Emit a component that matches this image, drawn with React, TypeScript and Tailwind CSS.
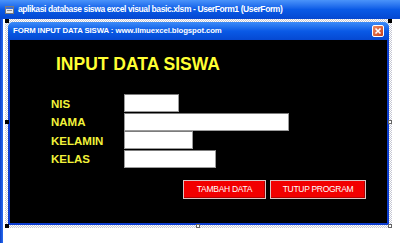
const fields = [
  { label: "NIS", width: "w-[55px]" },
  { label: "NAMA", width: "w-[165px]" },
  { label: "KELAMIN", width: "w-[69px]" },
  { label: "KELAS", width: "w-[92px]" },
];

function Handle({ className }: { className: string }) {
  return <div className={`absolute w-[4px] h-[4px] ${className}`} />;
}

export default function App() {
  return (
    <div className="w-[400px] h-[243px] overflow-hidden bg-white flex flex-col font-['Liberation_Sans',Arial,sans-serif]">
      {/* outer window title */}
      <div className="h-[19px] shrink-0 flex items-center gap-[4px] pl-[5px] bg-gradient-to-b from-[#4a93fa] via-[#0a5ae6] to-[#0548d2] text-white font-bold text-[8.5px] tracking-[-0.4px]">
        <svg width="9" height="8" viewBox="0 0 9 8">
          <rect x="0.5" y="0.5" width="8" height="7" fill="#e8e8e8" stroke="#7a7a7a" />
          <rect x="1" y="1" width="7" height="2" fill="#3a6fd8" />
          <rect x="2" y="4" width="5" height="1" fill="#8a8a8a" />
        </svg>
        <span>aplikasi database siswa excel visual basic.xlsm - UserForm1 (UserForm)</span>
      </div>

      <div className="flex flex-1 min-h-0">
        <div className="w-[3px] shrink-0 bg-gradient-to-r from-[#0a3fc8] to-[#2a6cf0]" />
        <div className="flex-1 pl-[2px]">
          {/* designer frame */}
          <div className="relative w-[387px] h-[209px] p-[3px] bg-[conic-gradient(#c6c8d4_25%,#ffffff_0_50%,#c6c8d4_0_75%,#ffffff_0)] bg-[length:2px_2px]">
            <Handle className="left-0 top-0 bg-black" />
            <Handle className="right-0 top-0 bg-black" />
            <Handle className="left-0 top-[101px] bg-black" />
            <Handle className="left-0 bottom-0 bg-black" />
            <Handle className="left-[191px] bottom-0 bg-white border border-[#666]" />
            <Handle className="right-0 bottom-0 bg-white border border-[#666]" />
            <Handle className="right-0 top-[101px] bg-white border border-[#666]" />

            <div className="w-full h-full flex flex-col">
              {/* userform title */}
              <div className="h-[18px] shrink-0 rounded-t-[5px] flex items-center justify-between pl-[5px] pr-[5px] bg-gradient-to-b from-[#3d8cf8] via-[#0a5ae6] to-[#0548d2] text-white font-bold text-[7.8px] tracking-[-0.1px]">
                <span>FORM INPUT DATA SISWA : www.ilmuexcel.blogspot.com</span>
                <div className="w-[12px] h-[12px] rounded-[2px] border border-white bg-gradient-to-br from-[#ee8a62] to-[#c63e18] flex items-center justify-center">
                  <svg width="8" height="8" viewBox="0 0 8 8">
                    <path d="M1.5 1.5 L6.5 6.5 M6.5 1.5 L1.5 6.5" stroke="#fff" strokeWidth="1.6" />
                  </svg>
                </div>
              </div>

              {/* userform body */}
              <div className="flex-1 bg-black border-x-2 border-b-2 border-[#0b3ccf] pl-[41px]">
                <h1 className="mt-[14px] ml-[5px] text-[17.5px] leading-[20px] font-bold text-[#ffff33]">
                  INPUT DATA SISWA
                </h1>

                <div className="mt-[20px] grid grid-cols-[73px_auto] grid-rows-[19px_18px_19px_18px]">
                  {fields.map((f) => (
                    <div key={f.label} className="contents">
                      <span className="self-center pt-[2px] text-[11.5px] leading-none font-bold text-[#f2f23a]">
                        {f.label}
                      </span>
                      <div
                        className={`${f.width} h-[18px] bg-white border border-[#9c9c9c] border-t-[#7c7c7c]`}
                      />
                    </div>
                  ))}
                </div>

                <div className="mt-[12px] ml-[132px] flex gap-[4px]">
                  <button className="w-[83px] h-[19px] bg-[#f20000] border border-[#dcc4c4] shadow-[inset_-1px_-1px_0_#b00000] text-white text-[8.5px] tracking-[-0.3px]">
                    TAMBAH DATA
                  </button>
                  <button className="w-[96px] h-[19px] bg-[#f20000] border border-[#dcc4c4] shadow-[inset_-1px_-1px_0_#b00000] text-white text-[8.5px] tracking-[-0.3px]">
                    TUTUP PROGRAM
                  </button>
                </div>
              </div>
            </div>
          </div>
        </div>
      </div>
    </div>
  );
}
